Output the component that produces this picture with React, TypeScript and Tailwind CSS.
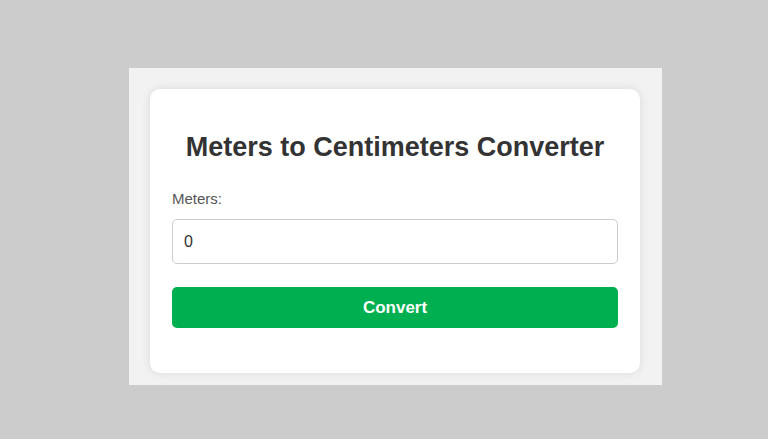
import { useState } from 'react'

export default function App() {
  const [meters, setMeters] = useState('0')

  return (
    <div className="w-[768px] h-[439px] bg-[#cccccc] pl-[129px] pt-[68px] font-['Liberation_Sans',Arial,sans-serif]">
      <div className="w-[533px] h-[317px] bg-[#f2f2f2] pt-[21px] pl-[21px]">
        <div className="w-[490px] h-[284px] bg-white rounded-[10px] shadow-[0_0_10px_rgba(0,0,0,0.1)] px-[22px] pt-[42px]">
          <h1 className="text-center text-[27px] leading-[32px] font-bold text-[#333333]">
            Meters to Centimeters Converter
          </h1>
          <label className="block mt-[26px] text-[15px] leading-[20px] text-[#555555]">Meters:</label>
          <input
            type="number"
            value={meters}
            onChange={(e) => setMeters(e.target.value)}
            className="mt-[10px] block w-full h-[45px] border border-[#cccccc] rounded-[5px] px-[11px] text-[16px] text-[#333333] outline-none"
          />
          <button className="mt-[23px] block w-full h-[41px] bg-[#00b050] rounded-[5px] text-white text-[17px] font-bold">
            Convert
          </button>
        </div>
      </div>
    </div>
  )
}
